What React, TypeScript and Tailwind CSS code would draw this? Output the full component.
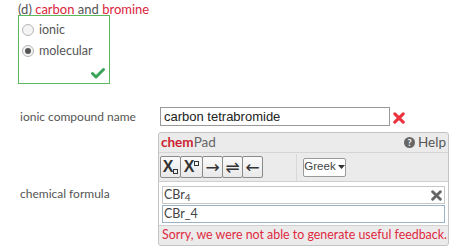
import React from "react";

const sans = { fontFamily: 'Lato, "Open Sans", sans-serif' };
const arial = { fontFamily: '"Liberation Sans", Arial, sans-serif' };

function Radio({ checked }: { checked?: boolean }) {
  return (
    <span className="inline-flex items-center justify-center w-[12px] h-[12px] rounded-full border border-[#b5b5b5] bg-[#f4f4f4]">
      {checked && <span className="w-[6px] h-[6px] rounded-full bg-[#555]" />}
    </span>
  );
}

function Check() {
  return (
    <svg width="14" height="12" viewBox="0 0 14 12">
      <path d="M1.5 6.5 L5 10 L12.5 2.5" fill="none" stroke="#3aa55a" strokeWidth="3" strokeLinecap="round" strokeLinejoin="round" />
    </svg>
  );
}

function Cross({ color, size }: { color: string; size: number }) {
  return (
    <svg width={size} height={size} viewBox="0 0 10 10">
      <path d="M1.5 1.5 L8.5 8.5 M8.5 1.5 L1.5 8.5" stroke={color} strokeWidth="2.6" strokeLinecap="round" />
    </svg>
  );
}

function TBtn({ children, w = 21 }: { children: React.ReactNode; w?: number }) {
  return (
    <div
      className="h-[22px] flex items-center justify-center border border-[#8a8a8a] bg-gradient-to-b from-[#fafafa] to-[#e9e9e9] text-[#333] -ml-px first:ml-0 rounded-[2px]"
      style={{ width: w }}
    >
      {children}
    </div>
  );
}

export default function App() {
  return (
    <div className="w-[474px] h-[251px] bg-white pl-[18px] pt-[1px] text-[#555]" style={sans}>
      <div className="text-[13px] leading-[16px]">
        (d) <span className="text-[#d9263c]">carbon</span> and <span className="text-[#d9263c]">bromine</span>
      </div>
      <div className="w-[92px] h-[69px] border border-[#5cb85c] -mt-[2px] relative">
        <div className="flex items-center gap-[5px] pl-[3px] pt-[7px] text-[12.5px] leading-[14px]">
          <Radio /> <span>ionic</span>
        </div>
        <div className="flex items-center gap-[5px] pl-[3px] pt-[7px] text-[12.5px] leading-[14px]">
          <Radio checked /> <span>molecular</span>
        </div>
        <div className="absolute right-[4px] bottom-[4px]">
          <Check />
        </div>
      </div>

      <div className="flex items-center mt-[23px]">
        <div className="w-[142px] pl-[2px] text-[12px]">ionic compound name</div>
        <div className="w-[230px] h-[19px] border border-[#999] flex items-center px-[3px] text-[13px] text-[#222]" style={arial}>
          carbon tetrabromide
        </div>
        <div className="ml-[3px] mt-[2px]">
          <Cross color="#ec3340" size={12} />
        </div>
      </div>

      <div className="flex mt-[6px]">
        <div className="w-[140px] pl-[2px] pt-[53px] text-[12px]">chemical formula</div>
        <div className="w-[291px] h-[114px] border border-[#c4c4c4] rounded-[3px] bg-[#ebebeb] flex flex-col">
          <div className="h-[20px] flex items-center justify-between px-[2px] border-b border-[#d6d6d6]">
            <div className="text-[13.5px]">
              <span className="text-[#cc1f33] font-bold">chem</span>
              <span className="text-[#666]">Pad</span>
            </div>
            <div className="flex items-center gap-[3px] text-[13.5px] text-[#555]">
              <span className="w-[11px] h-[11px] rounded-full bg-[#666] text-white text-[9px] font-bold leading-none flex items-center justify-center">?</span>
              Help
            </div>
          </div>
          <div className="h-[29px] flex items-center px-[1px] border-b border-[#cfcfcf]">
            <div className="flex">
              <TBtn>
                <span className="font-bold text-[16px] leading-none" style={arial}>X</span>
                <span className="w-[5px] h-[5px] border border-[#333] mt-[8px]" />
              </TBtn>
              <TBtn w={23}>
                <span className="font-bold text-[16px] leading-none" style={arial}>X</span>
                <span className="w-[5px] h-[5px] border border-[#333] -mt-[8px]" />
              </TBtn>
              <TBtn><span className="text-[17px] leading-none" style={{ fontFamily: '"DejaVu Sans", sans-serif' }}>→</span></TBtn>
              <TBtn><span className="text-[17px] leading-none" style={{ fontFamily: '"DejaVu Sans", sans-serif' }}>⇌</span></TBtn>
              <TBtn><span className="text-[17px] leading-none" style={{ fontFamily: '"DejaVu Sans", sans-serif' }}>←</span></TBtn>
            </div>
            <div className="w-px h-[27px] bg-[#d9d9d9] ml-[33px]" />
            <div className="ml-[6px] h-[19px] w-[43px] justify-center border border-[#999] rounded-[2px] bg-white flex items-center gap-[2px] text-[11.5px] text-[#444]" style={arial}>
              Greek
              <svg width="7" height="4" viewBox="0 0 7 4"><path d="M0 0 H7 L3.5 4 Z" fill="#333" /></svg>
            </div>
          </div>
          <div className="bg-white px-[3px] pt-[4px] pb-[2px] flex flex-col gap-[1px]">
            <div className="h-[18px] border border-[#c8c8c8] flex items-center justify-between pl-[1px] pr-[2px] text-[12.5px] text-[#444]">
              <span>CBr<sub className="text-[10px]">4</sub></span>
              <Cross color="#666" size={11} />
            </div>
            <div className="h-[18px] border border-[#9ab3c8] flex items-center pl-[1px] text-[12.5px] text-[#444]">
              CBr_4
            </div>
          </div>
          <div className="flex-1 flex items-center pl-[3px] text-[12.4px] whitespace-nowrap text-[#e0283f] border-t border-[#d0d0d0]">
            Sorry, we were not able to generate useful feedback.
          </div>
        </div>
      </div>
    </div>
  );
}
